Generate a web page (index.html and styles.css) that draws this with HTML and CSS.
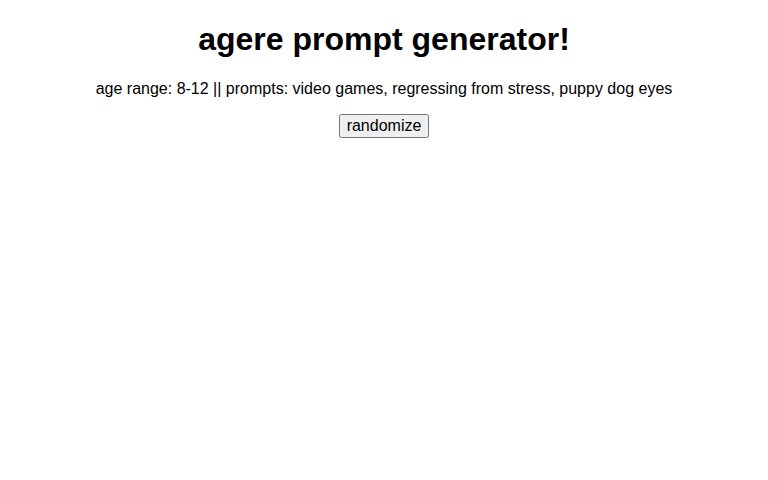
FILE: index.html
```html
<!DOCTYPE html>
<html lang="en">
<head>
  <meta charset="UTF-8">
  <title>agere prompt generator</title>
  <meta name="viewport" content="width=device-width, initial-scale=1">
  <link rel="stylesheet" href="styles.css">
</head>
<body>

<div class="main">
  <h1>agere prompt generator!</h1>
  <p id="prompt">age range: 8-12 || prompts: video games, regressing from stress, puppy dog eyes</p>
  <button class="random-btn" onclick="randomize()">randomize</button>
</div>

<script>
  const ages = ["0-2", "2-4", "4-6", "6-8", "8-12"];
  const prompts = ["video games", "regressing from stress", "puppy dog eyes", "coloring", "stuffies", "blanket fort", "cartoons", "nap time"];

  function pick(list) {
    return list[Math.floor(Math.random() * list.length)];
  }

  function randomize() {
    const chosen = [];
    while (chosen.length < 3) {
      const p = pick(prompts);
      if (!chosen.includes(p)) chosen.push(p);
    }
    document.getElementById('prompt').innerText = "age range: " + pick(ages) + " || prompts: " + chosen.join(", ");
  }
</script>

</body>
</html>
```

FILE: styles.css
```css
body {
  font-family: "Liberation Sans", Arial, sans-serif;
  margin: 0;
  background-color: #fff;
  color: #000;
  text-align: center;
}
h1 {
  font-size: 32px;
  margin: 21.44px 0;
}
p {
  font-size: 16px;
  margin: 16px 0;
}
.random-btn {
  font-family: "Liberation Sans", Arial, sans-serif;
  font-size: 16px;
}
```
